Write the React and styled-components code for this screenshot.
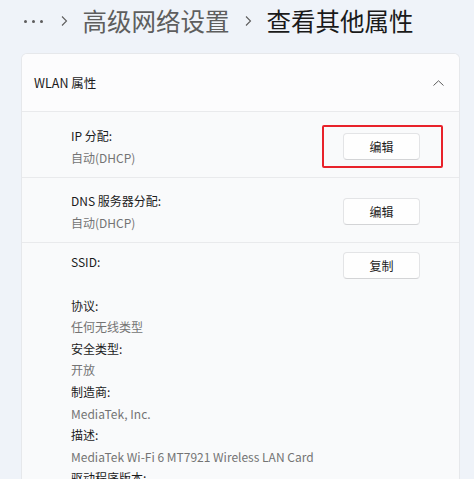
import React from 'react'
import styled, { createGlobalStyle } from 'styled-components'

const GlobalStyle = createGlobalStyle`
  html, body {
    margin: 0;
    padding: 0;
    background: #eff3f9;
    overflow: hidden;
  }
  body {
    font-family: "Noto Sans CJK SC", "Noto Sans", sans-serif;
  }
`

const Page = styled.div`
  width: 474px;
  height: 479px;
  overflow: hidden;
  padding: 0 14px 0 21px;
  box-sizing: border-box;
`

const Breadcrumb = styled.div`
  display: flex;
  align-items: center;
  height: 42px;
  margin-bottom: 11px;
  padding-left: 2.5px;
`

const Dots = styled.span`
  display: flex;
  gap: 5px;
  margin-right: 17px;
  span {
    width: 3px;
    height: 3px;
    border-radius: 50%;
    background: #5d5d5d;
  }
`

const Crumb = styled.span`
  font-size: 24.5px;
  font-weight: 400;
  color: ${p => (p.$current ? '#1a1a1a' : '#5e5e5e')};
  margin-right: ${p => p.$gap || 0};
  line-height: 1;
`

const Sep = styled.svg`
  width: 8px;
  height: 12px;
  margin-right: 15px;
  flex: none;
`

const Card = styled.div`
  background: #f9fafb;
  border: 1px solid #e6e8eb;
  border-bottom: none;
  border-radius: 6px 6px 0 0;
  overflow: hidden;
`

const Header = styled.div`
  display: flex;
  align-items: center;
  justify-content: space-between;
  height: 57px;
  padding: 0 15px 0 12px;
  background: #fcfcfd;
  border-bottom: 1px solid #e9eaec;
  font-size: 12.5px;
  color: #1b1b1b;
`

const Row = styled.div`
  display: flex;
  align-items: ${p => (p.$top ? 'flex-start' : 'center')};
  justify-content: space-between;
  padding: ${p => p.$pad};
  padding-left: 49px;
  padding-right: 39px;
  border-bottom: ${p => (p.$last ? 'none' : '1px solid #e9eaec')};
`

const Info = styled.div`
  display: flex;
  flex-direction: column;
  font-size: 12px;
  line-height: 21.6px;
`

const Label = styled.div`
  color: #1b1b1b;
  min-height: 21.6px;
`

const Value = styled.div`
  color: #747474;
  min-height: 21.6px;
`

const Button = styled.button`
  width: 77px;
  height: 27px;
  margin-top: ${p => p.$mt || 0};
  background: #fefefe;
  border: 1px solid #e3e4e6;
  border-bottom-color: #d3d4d6;
  border-radius: 4px;
  font-family: "Noto Sans CJK SC", sans-serif;
  font-size: 12px;
  color: #1b1b1b;
  padding: 0;
`

const Highlight = styled.div`
  padding: 6px 21px 6px 19px;
  margin-right: -23px;
  border: 2px solid #e8222a;
  border-radius: 2px;
  display: flex;
`

const Chevron = () => (
  <svg width="11" height="6" viewBox="0 0 11 6">
    <path d="M0.5 5.5 L5.5 0.8 L10.5 5.5" fill="none" stroke="#5d5d5d" strokeWidth="1" />
  </svg>
)

const Arrow = () => (
  <Sep viewBox="0 0 8 12">
    <path d="M2 1.5 L6.5 6 L2 10.5" fill="none" stroke="#5d5d5d" strokeWidth="1.1" />
  </Sep>
)

const details = [
  ['协议:', '任何无线类型'],
  ['安全类型:', '开放'],
  ['制造商:', 'MediaTek, Inc.'],
  ['描述:', 'MediaTek Wi-Fi 6 MT7921 Wireless LAN Card'],
  ['驱动程序版本:', '3.0.1.1177'],
]

export default function App() {
  return (
    <Page>
      <GlobalStyle />
      <Breadcrumb>
        <Dots><span /><span /><span /></Dots>
        <Arrow />
        <Crumb $gap="14px">高级网络设置</Crumb>
        <Arrow />
        <Crumb $current>查看其他属性</Crumb>
      </Breadcrumb>
      <Card>
        <Header>
          <span>WLAN 属性</span>
          <Chevron />
        </Header>
        <Row $pad="13px 0 9px">
          <Info>
            <Label>IP 分配:</Label>
            <Value>自动(DHCP)</Value>
          </Info>
          <Highlight>
            <Button>编辑</Button>
          </Highlight>
        </Row>
        <Row $pad="12px 0 9px">
          <Info>
            <Label>DNS 服务器分配:</Label>
            <Value>自动(DHCP)</Value>
          </Info>
          <Button>编辑</Button>
        </Row>
        <Row $top $last $pad="8px 0 0">
          <Info>
            <Label>SSID:</Label>
            <Value />
            {details.map(([k, v]) => (
              <React.Fragment key={k}>
                <Label>{k}</Label>
                <Value>{v}</Value>
              </React.Fragment>
            ))}
          </Info>
          <Button $mt="1px">复制</Button>
        </Row>
      </Card>
    </Page>
  )
}
